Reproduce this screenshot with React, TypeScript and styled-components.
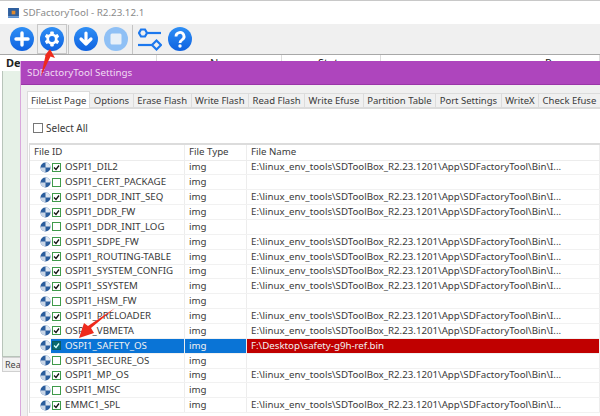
import React from 'react'
import styled, { createGlobalStyle } from 'styled-components'

const Global = createGlobalStyle`
  html, body { margin: 0; padding: 0; background: #fff; overflow: hidden; }
  * { box-sizing: border-box; }
`

const Screen = styled.div`
  position: relative;
  width: 600px;
  height: 416px;
  overflow: hidden;
  font-family: "Noto Sans", "Open Sans", sans-serif;
  color: #333;
  border-top: 1px solid #c8c8c8;
`

const TitleBar = styled.div`
  height: 23px;
  display: flex;
  align-items: center;
  gap: 4px;
  padding-left: 8px;
  font-size: 9.8px;
  color: #8a8a8a;
  background: #fff;
`

const Toolbar = styled.div`
  height: 31px;
  display: flex;
  align-items: center;
  padding-left: 7px;
  background: #f0f0f0;
  border-bottom: 1px solid #a8a8a8;
`

const ToolButton = styled.div<{ $active?: boolean }>`
  width: 30px;
  height: 30px;
  display: flex;
  align-items: center;
  justify-content: center;
  border: 1px solid ${p => (p.$active ? '#c8c8c8' : 'transparent')};
`

const ToolDivider = styled.div`
  width: 1px;
  height: 29px;
  margin: 0 2px 0 1px;
  background: #c4c4c4;
`

const DeviceHead = styled.div`
  height: 16px;
  display: grid;
  grid-template-columns: 157px 125px 99px 1fr;
  background: #fff;
  font-size: 11px;
  color: #222;
`

const HeadCell = styled.div<{ $pad: number; $bold?: boolean }>`
  padding-left: ${p => p.$pad}px;
  font-weight: ${p => (p.$bold ? 700 : 400)};
  border-right: 1px solid #dcdcdc;
`

const DevicePane = styled.div`
  height: 286px;
  width: 20px;
  margin-left: 2px;
  background: #e6f1e7;
  border: 1px solid #b8c4ba;
  border-width: 0 0 1px 1px;
`

const StatusTab = styled.div`
  width: 20px;
  height: 15px;
  margin-left: 2px;
  background: #f2f2f2;
  border: 1px solid #d0d0d0;
  font-size: 9px;
  padding-left: 2px;
  color: #444;
  white-space: nowrap;
`

/* floats over the main window */
const Dialog = styled.div`
  position: absolute;
  left: 20px;
  top: 60px;
  width: 580px;
  height: 356px;
  background: #f0f0f0;
  border-left: 1px solid #d9a8dc;
`

const DialogTitle = styled.div`
  height: 24px;
  display: flex;
  align-items: center;
  padding-left: 6px;
  font-size: 9.8px;
  color: #f1dcf3;
  background: #ae45bd;
  border-bottom: 1px solid #9a35a8;
`

const DialogBody = styled.div`
  padding: 6px 0 0 6px;
`

const TabStrip = styled.div`
  display: flex;
  height: 17px;
  align-items: flex-end;
`

const Tab = styled.div<{ $active?: boolean }>`
  height: ${p => (p.$active ? 17 : 15)}px;
  padding: 0 ${p => (p.$active ? 3 : 3.5)}px;
  display: flex;
  align-items: center;
  flex-shrink: 0;
  font-size: 9.5px;
  white-space: nowrap;
  color: #3a3a3a;
  background: ${p => (p.$active ? '#fff' : '#f0f0f0')};
  border: 1px solid #dcdcdc;
  border-width: 1px 1px ${p => (p.$active ? 0 : 1)}px ${p => (p.$active ? 1 : 0)}px;
`

const TabPage = styled.div`
  background: #fff;
  border: 1px solid #dcdcdc;
  border-right: 0;
  height: 320px;
  padding-top: 12px;
`

const SelectAll = styled.label`
  display: flex;
  align-items: center;
  gap: 3px;
  height: 14px;
  margin-left: 5px;
  font-size: 10px;
  color: #3a3a3a;
`

const Box = styled.span`
  width: 10px;
  height: 10px;
  background: #fff;
  border: 1px solid #777;
`

const Table = styled.div`
  margin: 8px 0 0 1px;
  border-top: 2px solid #dcdcdc;
  border-left: 1px solid #dcdcdc;
`

const Row = styled.div`
  display: grid;
  grid-template-columns: 155px 62px 1fr;
  height: 14.87px;
  border-bottom: 1px solid #f1f1f1;
  font-size: 9.7px;
  line-height: 14px;
  color: #3a3a3a;
  white-space: nowrap;
`

const HeadRow = styled(Row)`
  height: 15.5px;
  border-bottom: 1px solid #ececec;
`

const Cell = styled.div<{ $tone?: 'blue' | 'red' }>`
  display: flex;
  align-items: center;
  padding-left: 4px;
  overflow: hidden;
  border-right: 1px solid #ededed;
  background: ${p => (p.$tone === 'blue' ? '#0a74d6' : p.$tone === 'red' ? '#c00000' : 'transparent')};
  color: ${p => (p.$tone ? '#f2f2f2' : 'inherit')};
`

const IdCell = styled.div`
  display: flex;
  align-items: center;
  padding-left: 10px;
  overflow: hidden;
  border-right: 1px solid #ededed;
`

const IdText = styled.div<{ $selected?: boolean }>`
  flex: 1;
  display: flex;
  align-items: center;
  gap: 4px;
  height: 100%;
  padding-left: 1px;
  background: ${p => (p.$selected ? '#0a74d6' : 'transparent')};
  color: ${p => (p.$selected ? '#f2f2f2' : 'inherit')};
`

const Arrow = styled.svg`
  position: absolute;
  left: 0;
  top: -1px;
  pointer-events: none;
`

function Round({ children }: { children: React.ReactNode }) {
  return (
    <svg width="24" height="24" viewBox="0 0 24 24">
      <defs>
        <linearGradient id="blueBall" x1="0" y1="0" x2="0" y2="1">
          <stop offset="0" stopColor="#2f8ff5" />
          <stop offset="1" stopColor="#0f62e0" />
        </linearGradient>
      </defs>
      <circle cx="12" cy="12" r="12" fill="url(#blueBall)" />
      {children}
    </svg>
  )
}

function AppIcon() {
  return (
    <svg width="11" height="10" viewBox="0 0 12 11">
      <rect width="12" height="9" fill="#2f5f9e" />
      <rect x="4" y="3" width="4" height="4" fill="#e08a2e" />
      <rect y="9" width="12" height="2" fill="#5a8fd0" />
    </svg>
  )
}

function SlidersIcon() {
  return (
    <svg width="24" height="24" viewBox="0 0 24 24" fill="none" stroke="#1c78ee" strokeWidth="2.2">
      <path d="M3 2.5h4l2 3.5-2 3.5H3L1 6z" />
      <path d="M9 6h14" />
      <path d="M0 18h14" />
      <path d="M18.5 13.5l4.5 4.5-4.5 4.5-4.5-4.5z" />
    </svg>
  )
}

function RowIcon() {
  return (
    <svg width="11" height="11" viewBox="0 0 11 11">
      <circle cx="5.5" cy="5.5" r="5" fill="#2a5d9c" />
      <path d="M5.5 .5a5 5 0 0 1 5 5h-5z" fill="#dfe8f2" />
      <path d="M5.5 10.5a5 5 0 0 1-5-5h5z" fill="#c9d6e6" />
    </svg>
  )
}

function CheckMark({ on, selected }: { on: boolean; selected?: boolean }) {
  return (
    <svg width="9" height="9" viewBox="0 0 9 9" style={{ flexShrink: 0 }}>
      <rect x=".5" y=".5" width="8" height="8" fill={selected ? '#0a6a70' : '#fff'} stroke={selected ? '#0b5c60' : '#3f9a4a'} />
      {on && <path d="M2 4.5l2 2 3-4" fill="none" stroke={selected ? '#dff' : '#111'} strokeWidth="1.3" />}
    </svg>
  )
}

const LONG = 'E:\\linux_env_tools\\SDToolBox_R2.23.1201\\App\\SDFactoryTool\\Bin\\I...'

const files = [
  { id: 'OSPI1_DIL2', on: true },
  { id: 'OSPI1_CERT_PACKAGE', on: false },
  { id: 'OSPI1_DDR_INIT_SEQ', on: true },
  { id: 'OSPI1_DDR_FW', on: true },
  { id: 'OSPI1_DDR_INIT_LOG', on: false },
  { id: 'OSPI1_SDPE_FW', on: true },
  { id: 'OSPI1_ROUTING-TABLE', on: true },
  { id: 'OSPI1_SYSTEM_CONFIG', on: true },
  { id: 'OSPI1_SSYSTEM', on: true },
  { id: 'OSPI1_HSM_FW', on: false },
  { id: 'OSPI1_PRELOADER', on: true },
  { id: 'OSPI1_VBMETA', on: true },
  { id: 'OSPI1_SAFETY_OS', on: true, selected: true },
  { id: 'OSPI1_SECURE_OS', on: false },
  { id: 'OSPI1_MP_OS', on: true },
  { id: 'OSPI1_MISC', on: false },
  { id: 'EMMC1_SPL', on: true },
]

const tabs = ['Options', 'Erase Flash', 'Write Flash', 'Read Flash', 'Write Efuse', 'Partition Table', 'Port Settings', 'WriteX', 'Check Efuse']

export default function App() {
  return (
    <Screen>
      <Global />
      <TitleBar>
        <AppIcon />
        SDFactoryTool - R2.23.12.1
      </TitleBar>
      <Toolbar>
        <ToolButton>
          <Round>
            <path d="M12 6v12M6 12h12" stroke="#fff" strokeWidth="3.4" strokeLinecap="round" />
          </Round>
        </ToolButton>
        <ToolButton $active>
          <Round>
            <g fill="#fff">
              <circle cx="12" cy="12" r="5.6" />
              {[0, 60, 120, 180, 240, 300].map(a => (
                <rect key={a} x="10.2" y="4.600" width="3.600" height="3.400" rx="0.800" transform={`rotate(${a} 12 12)`} />
              ))}
            </g>
            <circle cx="12" cy="12" r="2.900" fill="#1a74ea" />
          </Round>
        </ToolButton>
        <ToolDivider />
        <ToolButton>
          <Round>
            <path d="M12 6v11M7 12l5 5 5-5" fill="none" stroke="#fff" strokeWidth="3.2" strokeLinecap="round" strokeLinejoin="round" />
          </Round>
        </ToolButton>
        <ToolButton>
          <svg width="24" height="24" viewBox="0 0 24 24">
            <circle cx="12" cy="12" r="12" fill="#8fc0f5" />
            <rect x="6.5" y="6.5" width="11" height="11" rx="1.500" fill="#e8f0f8" />
          </svg>
        </ToolButton>
        <ToolDivider />
        <ToolButton>
          <SlidersIcon />
        </ToolButton>
        <ToolButton>
          <Round>
            <path d="M8 9.500a4 4 0 1 1 6 3.400c-1.400.9-2 1.400-2 3" fill="none" stroke="#fff" strokeWidth="2.800" />
            <circle cx="12" cy="19" r="1.700" fill="#fff" />
          </Round>
        </ToolButton>
      </Toolbar>
      <DeviceHead>
        <HeadCell $pad={6} $bold>De</HeadCell>
        <HeadCell $pad={53}>Name</HeadCell>
        <HeadCell $pad={36}>Status</HeadCell>
        <HeadCell $pad={164}>Progress</HeadCell>
      </DeviceHead>
      <DevicePane />
      <StatusTab>Rea</StatusTab>

      <Dialog>
        <DialogTitle>SDFactoryTool Settings</DialogTitle>
        <DialogBody>
          <TabStrip>
            <Tab $active>FileList Page</Tab>
            {tabs.map(t => (
              <Tab key={t}>{t}</Tab>
            ))}
          </TabStrip>
          <TabPage>
            <SelectAll>
              <Box />
              Select All
            </SelectAll>
            <Table>
              <HeadRow>
                <Cell>File ID</Cell>
                <Cell>File Type</Cell>
                <Cell>File Name</Cell>
              </HeadRow>
              {files.map(f => (
                <Row key={f.id}>
                  <IdCell>
                    <RowIcon />
                    <IdText $selected={f.selected}>
                      <CheckMark on={f.on} selected={f.selected} />
                      {f.id}
                    </IdText>
                  </IdCell>
                  <Cell $tone={f.selected ? 'blue' : undefined}>img</Cell>
                  <Cell $tone={f.selected ? 'red' : undefined}>
                    {f.selected ? 'F:\\Desktop\\safety-g9h-ref.bin' : f.on ? LONG : ''}
                  </Cell>
                </Row>
              ))}
            </Table>
          </TabPage>
        </DialogBody>
      </Dialog>

      <Arrow width="600" height="416" viewBox="0 0 600 416">
        <path d="M50 49L55 58 50.500 56.500 41 76 45.500 55.500 44.500 56z" fill="#ee2a1c" />
        <path d="M115 308L91 328 94 333 79 338 84 323 88 326z" fill="#ee2a1c" />
      </Arrow>
    </Screen>
  )
}
